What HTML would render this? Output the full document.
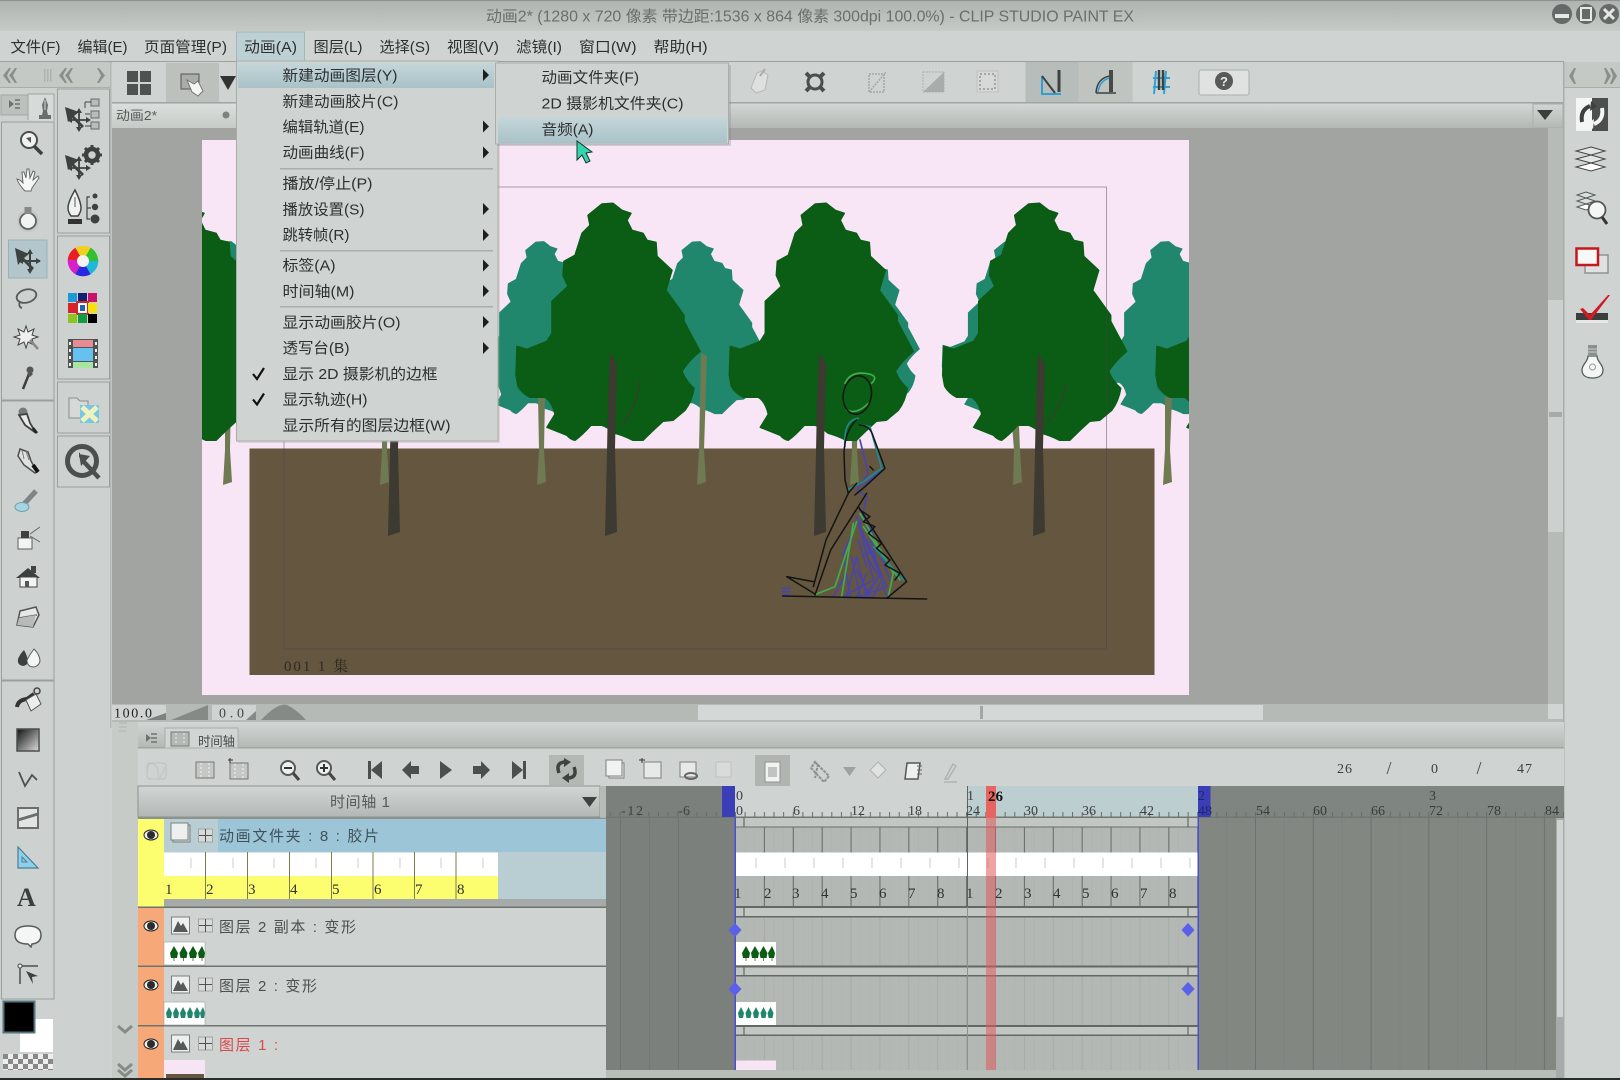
<!DOCTYPE html>
<html lang="zh"><head><meta charset="utf-8"><title>CLIP STUDIO PAINT EX</title>
<style>
html,body{margin:0;padding:0;background:#cfd4d2;width:1620px;height:1080px;overflow:hidden}
svg{display:block;position:absolute;left:0;top:0}
text{font-family:"Liberation Sans","Noto Sans CJK SC",sans-serif;font-size:15px;fill:#2c3030}
.s{font-family:"Liberation Serif","Noto Serif CJK SC",serif}
.n{font-family:"Liberation Serif",serif;font-size:14px;fill:#3c403e}
.nb{font-family:"Liberation Serif",serif;font-size:15px;fill:#2e3230}
.r{font-size:15px;fill:#3a3e3c}
</style></head><body>
<svg width="1620" height="1080" viewBox="0 0 1620 1080" xmlns="http://www.w3.org/2000/svg">
<defs>
<linearGradient id="gT" x1="0" y1="0" x2="0" y2="1"><stop offset="0" stop-color="#aeb3b0"/><stop offset="1" stop-color="#c5cac7"/></linearGradient>
<linearGradient id="gB" x1="0" y1="0" x2="0" y2="1"><stop offset="0" stop-color="#d2d7d5"/><stop offset="1" stop-color="#b3b8b5"/></linearGradient>
<linearGradient id="gH" x1="0" y1="0" x2="0" y2="1"><stop offset="0" stop-color="#c5d6d9"/><stop offset="1" stop-color="#a9c2c8"/></linearGradient>
<linearGradient id="gG" x1="0" y1="0" x2="1" y2="1"><stop offset="0" stop-color="#111"/><stop offset="1" stop-color="#ddd"/></linearGradient>
<linearGradient id="gS" x1="0" y1="0" x2="0" y2="1"><stop offset="0" stop-color="#dadedc"/><stop offset="1" stop-color="#c6cbc8"/></linearGradient>
<pattern id="pTick" patternUnits="userSpaceOnUse" x="735" y="812" width="9.63" height="5"><rect width="1" height="5" fill="#666c68"/></pattern>
<pattern id="pG3" patternUnits="userSpaceOnUse" x="735" y="0" width="28.89" height="10"><rect width="1" height="10" fill="#a6aba8"/></pattern>
<pattern id="pG1" patternUnits="userSpaceOnUse" x="735" y="0" width="9.63" height="10"><rect width="1" height="10" fill="#afb4b1"/></pattern>
<pattern id="pD" patternUnits="userSpaceOnUse" x="735" y="0" width="57.78" height="10"><rect width="1" height="10" fill="#6c726e"/></pattern>
<pattern id="pD3" patternUnits="userSpaceOnUse" x="735" y="0" width="28.89" height="10"><rect width="1" height="10" fill="#777d79"/></pattern>
<pattern id="pV" patternUnits="userSpaceOnUse" x="735" y="0" width="28.89" height="10"><rect width="1" height="10" fill="#666b68"/></pattern>
<pattern id="pC" patternUnits="userSpaceOnUse" x="3" y="1054" width="10" height="10"><rect width="10" height="10" fill="#eee"/><rect width="5" height="5" fill="#888"/><rect x="5" y="5" width="5" height="5" fill="#888"/></pattern>
<clipPath id="cP"><rect x="202" y="140" width="987" height="555"/></clipPath>
<path id="tree" d="M-8,.7 L3,0 L12,7 L21,10 L17,17 L22,27 L33,30 L37,37 L46,39 L47,53 L62,67 L56,87 L74,112 L74,118 L90,148 Q78,158 72,168 Q76,178 84,185 Q82,198 75,207 L63,217 L53,218 Q42,228 33,237 L23,237 Q13,232 5,230 Q-2,224 -8,222 L-19,222 Q-28,232 -35,237 Q-40,236 -43,232 L-63,224 L-55,211 Q-58,198 -65,194 L-80,194 Q-88,190 -92,183 L-94,172 L-93,143 L-83,146 L-63,138 L-58,130 L-58,98 L-42,83 L-47,72 L-46,58 L-35,52 L-28,30 L-20,22 L-22,12 Z" stroke-linejoin="round"/>
</defs>

<rect width="1620" height="1080" fill="#cfd4d2"/>
<!-- title bar -->
<rect width="1620" height="31" fill="url(#gT)"/>
<rect width="1620" height="1" fill="#8d928f"/>
<text x="486" y="21.5" style="font-size:15.5px;fill:#6a6f6c" textLength="648" lengthAdjust="spacingAndGlyphs">动画2* (1280 x 720 像素 带边距:1536 x 864 像素 300dpi 100.0%)  - CLIP STUDIO PAINT EX</text>
<g fill="#656a68"><ellipse cx="1562" cy="14" rx="10" ry="10"/><ellipse cx="1586" cy="14" rx="10" ry="10"/><ellipse cx="1609" cy="14" rx="10" ry="10"/></g>
<rect x="1555" y="14" width="14" height="4" fill="#e4e7e6"/><rect x="1581" y="8" width="10" height="12" fill="none" stroke="#e4e7e6" stroke-width="2"/>
<path d="M1604,9L1614,19M1614,9L1604,19" stroke="#e4e7e6" stroke-width="3"/>

<!-- menu bar -->
<rect y="31" width="1620" height="30" fill="#cfd4d2"/>
<rect x="236.500" y="32" width="68" height="29" fill="#bdd0d4" stroke="#a4b6ba"/>
<text x="10.500" y="52" textLength="50" lengthAdjust="spacingAndGlyphs">文件(F)</text>
<text x="77.500" y="52" textLength="50" lengthAdjust="spacingAndGlyphs">编辑(E)</text>
<text x="144" y="52" textLength="83" lengthAdjust="spacingAndGlyphs">页面管理(P)</text>
<text x="244" y="52" textLength="53" lengthAdjust="spacingAndGlyphs">动画(A)</text>
<text x="313.500" y="52" textLength="49" lengthAdjust="spacingAndGlyphs">图层(L)</text>
<text x="379.500" y="52" textLength="50.500" lengthAdjust="spacingAndGlyphs">选择(S)</text>
<text x="447" y="52" textLength="52" lengthAdjust="spacingAndGlyphs">视图(V)</text>
<text x="516" y="52" textLength="46" lengthAdjust="spacingAndGlyphs">滤镜(I)</text>
<text x="579" y="52" textLength="57.500" lengthAdjust="spacingAndGlyphs">窗口(W)</text>
<text x="653.500" y="52" textLength="54" lengthAdjust="spacingAndGlyphs">帮助(H)</text>

<!-- top toolbar -->
<rect y="61" width="1564" height="1.500" fill="#9da29f"/>
<rect x="112" y="62" width="1452" height="41" fill="#cfd4d2"/>
<rect x="112" y="102" width="1452" height="1.500" fill="#a2a7a4"/>
<rect x="112" y="104" width="1452" height="24" fill="url(#gB)"/>
<rect x="112" y="104" width="124" height="24" fill="url(#gS)"/>
<rect x="166" y="63" width="53" height="39" fill="#bcc1be"/>
<g fill="#4e5351"><rect x="127" y="71" width="11" height="11"/><rect x="140" y="71" width="11" height="11"/><rect x="127" y="84" width="11" height="11"/><rect x="140" y="84" width="11" height="11"/></g>
<path d="M181,74h18v15h-18z" fill="#a8adaa" stroke="#555" stroke-width="1"/><path d="M187,80l7,4 4,-3 5,10 -5,5 -6,-4z" fill="#f4f5f5" stroke="#777"/>
<path d="M220,76h16l-8,14z" fill="#333"/>
<!-- toolbar right -->
<rect x="1025.500" y="62" width="53" height="40" fill="#b7bdba"/><rect x="1078.500" y="62" width="54" height="40" fill="#bfc4c1"/>
<path d="M751,88l6,-15 5,-2 6,4 -3,15 -9,3z" fill="#dde0de" stroke="#b3b7b5"/><path d="M760,76l5,-7" stroke="#aaa" stroke-width="2"/>
<g fill="none" stroke="#4a4f4d" stroke-width="4"><circle cx="815" cy="82" r="7" stroke-width="3"/><path d="M806,73l4,4M824,73l-4,4M806,91l4,-4M824,91l-4,-4"/></g>
<path d="M869,74h15v18h-15z M869,92L886,72" fill="none" stroke="#a4a8a6" stroke-dasharray="2 1" stroke-width="1.500"/>
<path d="M923,72h21v20h-21z" fill="none" stroke="#aeb2b0" stroke-dasharray="2 1"/><path d="M923,92L944,72V92z" fill="#a8acaa"/>
<rect x="977" y="71" width="21" height="21" fill="#d6d9d8" stroke="#bcc0be"/><path d="M980,74h15v15h-15z" fill="none" stroke="#a3a7a5" stroke-dasharray="2 2" stroke-width="2"/>
<path d="M1042,76V94H1061" fill="none" stroke="#2e9fd0" stroke-width="2"/><path d="M1042,76L1055,93" fill="none" stroke="#3d4240" stroke-width="2"/><path d="M1059,70V92" stroke="#3d4240" stroke-width="3"/>
<path d="M1096,93Q1097,78 1110,76M1096,93H1116" fill="none" stroke="#3d4240" stroke-width="1.500"/><path d="M1098,92Q1100,80 1110,78" fill="none" stroke="#2e9fd0" stroke-width="1.500"/><path d="M1111,70V92" stroke="#464b49" stroke-width="4"/>
<path d="M1153,78h17M1153,87h17M1156,71l-2,23M1166,71l-2,23" stroke="#2ea3d6" stroke-width="2" fill="none"/><path d="M1159,70v20M1163,70v20" stroke="#3d4240" stroke-width="2.500"/>
<rect x="1199" y="70" width="50" height="25" rx="2" fill="#dfe2e1" stroke="#a9aeab"/><circle cx="1224" cy="81" r="9" fill="#565b59"/><text x="1220" y="86" style="font-size:13px;font-weight:700;fill:#e8ebe9">?</text>
<path d="M1537,110h16l-8,10z" fill="#3a3e3c"/><rect x="1533" y="104" width="30" height="24" fill="none" stroke="#a9aeab"/>
<!-- document tab -->
<text x="116" y="120" style="font-size:13px;fill:#555a58" textLength="41" lengthAdjust="spacingAndGlyphs">动画2*</text>
<circle cx="226" cy="115" r="3.500" fill="#7d827f"/>

<!-- canvas area -->
<rect x="112" y="128" width="1436" height="577" fill="#a1a4a1"/>
<rect x="202" y="140" width="987" height="555" fill="#f8e6f6"/>
<rect x="249.500" y="448.500" width="905" height="226.500" fill="#65563f"/>
<g clip-path="url(#cP)">
 <g fill="#21876c" stroke="#21876c" stroke-width="1.500">
  <use href="#tree" transform="translate(229,241.700) scale(.725)"/><use href="#tree" transform="translate(385.500,241.700) scale(.725)"/><use href="#tree" transform="translate(541.700,241.700) scale(.725)"/><use href="#tree" transform="translate(698,241.700) scale(.725)"/><use href="#tree" transform="translate(854,241.700) scale(.725)"/><use href="#tree" transform="translate(1010.500,241.700) scale(.725)"/><use href="#tree" transform="translate(1166.700,241.700) scale(.725)"/>
 </g>
 <g fill="#6e7a52">
  <path d="M225,395h6l-1,55 2,32 -9,3 2,-35z"/><path d="M382,395h6l-1,55 2,32 -9,3 2,-35z"/><path d="M538,395h7l-1,55 2,32 -9,3 2,-35z"/><path d="M701,353l6,3 -3,94 2,32 -9,3 2,-35z"/><path d="M851,395h7l-1,55 2,32 -9,3 2,-35z"/><path d="M1012,425h7l1,25 2,32 -9,3 1,-35z"/><path d="M1165,397h7l-2,53 2,32 -9,3 2,-35z"/>
 </g>
 <g fill="#0b5c14" stroke="#0b5c14" stroke-width="1.500">
  <use href="#tree" transform="translate(183,203.300)"/><use href="#tree" transform="translate(396.700,203.300)"/><use href="#tree" transform="translate(610,203.300)"/><use href="#tree" transform="translate(823.300,203.300)"/><use href="#tree" transform="translate(1036.700,203.300)"/><use href="#tree" transform="translate(1250,203.300)"/>
 </g>
 <g fill="#3d3a31">
  <path d="M393,353l7,11 -1,40 -1,44 2,84 -12,4 2,-84 1,-50z"/><path d="M610,353l7,11 -1,40 -1,44 2,84 -12,4 2,-84 1,-50z"/><path d="M819,353l7,11 -1,40 -1,44 2,84 -12,4 2,-84 1,-50z"/><path d="M1038,353l7,11 -1,40 -1,44 2,84 -12,4 2,-84 1,-50z"/>
 </g>
 <g fill="none" stroke="#3d3a31" stroke-width="1.200"><path d="M622,425Q636,410 640,380"/><path d="M1045,425Q1060,410 1066,385"/></g>
</g>
<rect x="284" y="187" width="822.500" height="462" fill="none" stroke="#4a3c4c" stroke-opacity=".45"/>
<text class="s" x="284" y="671" style="font-size:15px;fill:#2e2a20" textLength="64">001 1 集</text>
<!-- figure -->
<g transform="translate(700,340) scale(.3333)" fill="none" stroke-linecap="round" stroke-linejoin="round">
 <g stroke="#4a45a8" stroke-width="5"><path d="M480,300L505,400 470,450 500,470 480,560 530,680 560,770"/><path d="M465,560L430,640 450,770"/><path d="M490,520L540,700 500,770 470,650 440,770"/><path d="M470,530L520,720 430,770"/><path d="M510,560L570,720M500,600L560,740 480,770"/><path d="M248,745h22M248,755h22M248,765h22"/><path d="M550,380L490,440"/><path d="M455,650L480,770M470,690L510,770M500,700L470,770M530,720L490,770M440,700L400,770M540,730L520,770"/><path d="M480,560L510,640 495,640 530,700M475,600L500,680"/></g>
 <g stroke="#42ad4e" stroke-width="5"><path d="M435,130Q450,95 495,100T515,130"/><path d="M440,210Q470,225 505,190"/><path d="M470,545L405,740 350,762"/><path d="M460,550L425,770"/><path d="M480,520L580,700 565,770"/><path d="M490,560L600,720"/></g>
 <g stroke="#1f8a90" stroke-width="5"><path d="M435,320Q430,240 475,235"/><path d="M545,385L510,260 485,255"/><path d="M440,450L490,425 545,385"/><path d="M520,620L610,720"/></g>
 <g stroke="#131512" stroke-width="4.500"><ellipse cx="472" cy="165" rx="42" ry="58" transform="rotate(10 472 165)"/><path d="M478,255Q510,255 520,290L555,385 495,440 465,465"/><path d="M470,240Q435,270 432,340L435,420 445,460 378,600 340,740"/><path d="M500,460L392,630 345,765"/><path d="M475,500L620,725 560,775"/><path d="M340,725L260,710 345,762"/><path d="M248,768L680,777"/><path d="M480,510L510,530 490,545 525,560 505,580 545,610 530,625 570,660 555,675 600,700 585,720"/><path d="M445,460L470,430"/><path d="M510,380l10,10"/></g>
</g>

<!-- canvas scrollbars -->
<rect x="1548" y="128" width="15" height="577" fill="#b6bbb8"/>
<rect x="1548" y="300" width="15" height="232" fill="#ccd1cf"/><rect x="1549" y="412" width="13" height="5" fill="#a6aba8"/>
<rect x="112" y="704" width="1452" height="18" fill="#b5bab7"/>
<rect x="112" y="705" width="54" height="15" fill="#cfd4d2"/><path d="M146,720L166,713V720z" fill="#7c827f"/>
<path d="M171,720L208,705V720z" fill="#858a87"/>
<rect x="212" y="705" width="44" height="15" fill="#cfd4d2"/><path d="M246,720L256,711V720z" fill="#858a87"/>
<path d="M261,720Q278,702 287,705Q297,710 306,720z" fill="#858a87"/>
<text class="s" x="114" y="717.500" style="font-size:14px;fill:#222" textLength="38">100.0</text>
<text class="s" x="219" y="717.500" style="font-size:14px;fill:#444" textLength="25">0.0</text>
<rect x="698" y="705" width="565" height="15" fill="#d4d8d6"/><rect x="980" y="706" width="3" height="13" fill="#a3a8a5"/>
<rect x="1548" y="704" width="15" height="15" fill="#d1d5d3"/>

<!-- left tool columns -->
<rect x="0" y="62" width="111" height="1018" fill="#cdd2d0"/>
<rect x="0" y="62" width="111" height="25" fill="#c4c9c6"/><rect x="0" y="87" width="111" height="1" fill="#a9aeab"/>
<rect x="110" y="62" width="1.500" height="666" fill="#b3b8b5"/>
<g fill="#8a8f8c"><path d="M9,68l-6,7.500 6,7.500 2,0 -4,-7.500 4,-7.500zM15,68l-6,7.500 6,7.500 2,0 -4,-7.500 4,-7.500z"/><path d="M65,68l-6,7.500 6,7.500 2,0 -4,-7.500 4,-7.500zM71,68l-6,7.500 6,7.500 2,0 -4,-7.500 4,-7.500z"/><path d="M99,68l6,7.500 -6,7.500 -2,0 4,-7.500 -4,-7.500z"/></g>
<g fill="#aeb3b0"><rect x="44" y="69" width="1.500" height="13"/><rect x="47" y="69" width="1.500" height="13"/><rect x="50" y="69" width="1.500" height="13"/></g>
<rect x="1" y="95" width="27" height="20" fill="#bcc1be" stroke="#a3a8a5"/>
<path d="M28,120V94H54V121" fill="#d6dad8" stroke="#9fa4a1"/>
<path d="M9,100l5,4 -5,4z" fill="#6e7370"/><path d="M15,100h5M15,104h5M15,108h5" stroke="#6e7370" stroke-width="1.500"/>
<path d="M45,97l3,8 -1,6 1,4h3v4h-12v-4h3l1,-4 -1,-6z" fill="#6a6f6c"/><path d="M45,100v10" stroke="#ddd"/>
<g fill="none" stroke="#9ba09d"><rect x="1.500" y="122" width="52.500" height="278"/><rect x="1.500" y="401" width="52.500" height="279"/><rect x="1.500" y="681" width="52.500" height="318"/>
<rect x="57.500" y="89" width="52" height="144"/><rect x="57.500" y="236" width="52" height="143"/><rect x="57.500" y="382" width="52" height="51"/><rect x="57.500" y="436" width="52" height="51"/></g>

<!-- left col 1 icons -->
<g transform="translate(29,140)"><circle r="8" fill="#f0f2f1" stroke="#4a4f4d" stroke-width="2"/><path d="M5,6l8,8" stroke="#3c403e" stroke-width="3.500"/><path d="M-3,-2l5,-1v6z" fill="#555"/></g>
<g transform="translate(28,180)"><path d="M-3,11Q-9,5 -11,-1L-8,0 -5,3 -6,-8 -4,-8 -2,-2 -1,-11 1,-11 2,-2 5,-9 7,-8 5,0 10,-4 11,-2 4,8 3,11z" fill="#f6f7f7" stroke="#666b68"/></g>
<g transform="translate(28,221)"><circle r="11" fill="#bcc0be" opacity=".6"/><circle r="8" fill="#f2f3f3" stroke="#5f6461" stroke-width="1.800"/><rect x="-3.500" y="-14" width="7" height="7" fill="#85898a"/></g>
<rect x="8.500" y="240" width="38.500" height="38" fill="#b2c6cb" stroke="#9cb1b6"/>
<g fill="#3c4240"><path d="M15,248L29,254 24,258 34,268 32,270 22,260 18,265z"/><path d="M30,251v21M20,261H40" stroke="#3c4240" stroke-width="2"/><path d="M30,249l-3,5h6zM30,274l-3,-5h6zM18,261l5,-3v6zM41,261l-5,-3v6z"/></g>
<g transform="translate(27,298)" fill="none" stroke="#555a58" stroke-width="1.800"><ellipse cy="-2" rx="10" ry="6.500" transform="rotate(-15)"/><path d="M-7,3Q-9,9 -5,10"/></g>
<g transform="translate(26,336)"><path d="M0,-10l2,6 6,-3 -2,6 6,2 -6,2 2,6 -6,-3 -2,6 -2,-6 -6,3 2,-6 -6,-2 6,-2 -2,-6 6,3z" fill="#efefef" stroke="#444"/><path d="M4,4l8,9" stroke="#888" stroke-width="2.500"/></g>
<g transform="translate(28,377)"><path d="M-5,12L1,-3" stroke="#3a3e3c" stroke-width="2.500"/><path d="M-1,-3l3,-3 3,3 -3,3z" fill="#555"/><circle cx="2" cy="-7" r="3.500" fill="#555"/></g>
<g transform="translate(28,420)"><circle cx="-5" cy="-8" r="4.500" fill="#777c79"/><path d="M-9,-5l8,-1 3,9 6,10 -11,-8z" fill="#e8eae9" stroke="#3e4341" stroke-width="1.800"/><path d="M5,8l4,5" stroke="#222" stroke-width="2.500"/></g>
<g transform="translate(28,460)"><path d="M-8,-11l8,3 3,9 6,11 -2,1 -11,-8 -6,-9z" fill="#dfe2e1" stroke="#4a4f4d" stroke-width="1.500"/><path d="M-6,-10l2,9M-2,-9l3,9" stroke="#777c79"/><path d="M5,5l5,7" stroke="#111" stroke-width="4"/></g>
<g transform="translate(28,500)"><path d="M-4,4L8,-9" stroke="#80858a" stroke-width="5"/><ellipse cx="-6" cy="7" rx="7" ry="4.500" fill="#a8d4e0" stroke="#6a9fb0"/></g>
<g transform="translate(28,538)"><rect x="-10" y="0" width="14" height="11" fill="#f2f3f3" stroke="#5a5f5c"/><rect x="-7" y="-7" width="8" height="7" fill="#3c403e"/><path d="M2,-4l10,-7M2,-2l10,6" stroke="#666"/></g>
<g transform="translate(28,577)"><path d="M-12,1L0,-9 12,1z" fill="#3c403e"/><rect x="-8" y="0" width="17" height="10" fill="#f2f3f3" stroke="#444"/><rect x="3" y="-11" width="5" height="7" fill="#444"/><rect x="-3" y="4" width="4" height="6" fill="#555"/></g>
<g transform="translate(28,617)"><path d="M-8,-6L8,-10 11,-2 5,10 -11,8z" fill="#e6e8e7" stroke="#4f5451" stroke-width="1.500"/><path d="M-9,1L9,-2" stroke="#5a5f5c" stroke-width="1.500"/><path d="M-9,1L8,-2 5,10 -11,8z" fill="#b6bab8"/></g>
<g transform="translate(28,657)"><path d="M-5,9Q-11,8 -10,2 -8,-3 -4,-7 -1,-2 0,4 0,8 -5,9z" fill="#3c403e"/><path d="M6,10Q-1,10 -1,3 2,-3 6,-8 12,-2 12,4 11,9 6,10z" fill="#f4f5f5" stroke="#5d6260"/></g>
<g transform="translate(28,700)"><path d="M-11,7Q-10,0 -1,-1L6,-6" stroke="#333" stroke-width="4" fill="none"/><path d="M-2,0L8,-6 13,4 3,11z" fill="#eceeed" stroke="#555"/><circle cx="9" cy="-9" r="3" fill="none" stroke="#444" stroke-width="1.500"/></g>
<rect x="17" y="729" width="22" height="22" fill="url(#gG)" stroke="#4a4f4d" stroke-width="1.500"/>
<path d="M19,772L25,786 32,775 37,780" fill="none" stroke="#4c514f" stroke-width="1.800"/>
<g fill="#e2e4e3" stroke="#6a6f6c" stroke-width="2"><rect x="18" y="808" width="20" height="20"/></g><path d="M18,820L38,814" stroke="#6a6f6c" stroke-width="3"/>
<path d="M18,847V868H38z" fill="#8ed0ea" stroke="#4a7e96" stroke-width="1.200"/><path d="M22,862v-5l5,5z" fill="none" stroke="#4a7e96"/>
<text class="s" x="17" y="906" style="font-size:26px;font-weight:700;fill:#3a3e3c">A</text>
<path d="M15,935Q15,926 28,926T41,935Q41,943 32,944L31,947 28,944Q15,944 15,935z" fill="#f4f5f5" stroke="#585d5a" stroke-width="1.500"/>
<g transform="translate(28,975)"><path d="M-8,-9V9" stroke="#4c514f" stroke-width="1.500"/><path d="M-8,-9H10" stroke="#4c514f" stroke-width="1.500"/><path d="M-2,-4L10,1 4,2 5,9z" fill="#3c403e"/><circle cx="-8" cy="-9" r="2" fill="#f2f3f3" stroke="#444"/></g>
<!-- colours -->
<rect x="20" y="1019" width="33" height="33" fill="#fff"/>
<rect x="3.500" y="1001.500" width="31" height="31" fill="#000" stroke="#53777f" stroke-width="2"/>
<rect x="3" y="1054" width="50" height="16" fill="url(#pC)"/>

<!-- left col 2 icons -->
<g fill="#3c4240"><path d="M65,107L79,112 74,116 84,126 82,128 72,118 68,122z"/><path d="M79,110v20M69,120H89" stroke="#3c4240" stroke-width="1.800"/><path d="M79,108l-3,5h6zM79,132l-3,-5h6zM67,120l5,-3v6zM91,120l-5,-3v6z"/></g>
<g fill="#b8bcba" stroke="#666b68"><rect x="91" y="99" width="8" height="7"/><rect x="91" y="111" width="8" height="7"/><rect x="91" y="122" width="8" height="7"/></g>
<path d="M85,102v0h6M85,102v6M85,114h5M85,126h6" stroke="#444" fill="none"/>
<g fill="#3c4240"><path d="M65,155L79,160 74,164 84,174 82,176 72,166 68,170z"/><path d="M79,158v20M69,168H89" stroke="#3c4240" stroke-width="1.800"/><path d="M79,156l-3,5h6zM79,180l-3,-5h6zM67,168l5,-3v6zM91,168l-5,-3v6z"/></g>
<circle cx="92" cy="155" r="6" fill="#cdd2d0" stroke="#3c4240" stroke-width="4.500"/><g stroke="#3c4240" stroke-width="3"><path d="M92,145v3M92,162v3M82,155h3M99,155h3M85,148l2,2M97,160l2,2M85,162l2,-2M97,150l2,-2"/></g>
<path d="M75,190q6,12 6,18 0,4 -3,8h-7q-3,-4 -3,-8 0,-6 7,-18z" fill="#f0f2f1" stroke="#444" stroke-width="1.500"/><path d="M75,197v10" stroke="#555"/><rect x="68" y="219" width="14" height="5" fill="#333"/>
<path d="M90,197h-3v22h3M87,208h4" fill="none" stroke="#444" stroke-width="1.200"/><circle cx="95" cy="196" r="2.500" fill="#3c4240"/><circle cx="95" cy="207" r="3.200" fill="#3c4240"/><circle cx="95" cy="219" r="4.500" fill="#3c4240"/>
<!-- colour wheel -->
<g transform="translate(83,261)" fill="none" stroke-width="9.500"><circle r="10.500" stroke="#e82020" stroke-dasharray="12 100" transform="rotate(-180)"/><circle r="10.500" stroke="#f0d020" stroke-dasharray="12 100" transform="rotate(-120)"/><circle r="10.500" stroke="#30c030" stroke-dasharray="12 100" transform="rotate(-60)"/><circle r="10.500" stroke="#20b8d8" stroke-dasharray="12 100" transform="rotate(0)"/><circle r="10.500" stroke="#2828e0" stroke-dasharray="12 100" transform="rotate(60)"/><circle r="10.500" stroke="#d820c8" stroke-dasharray="12 100" transform="rotate(120)"/></g>
<circle cx="83" cy="261" r="6" fill="#f2f3f3"/>
<g><rect x="68" y="293" width="9" height="9" fill="#1a9bd7"/><rect x="78" y="293" width="9" height="9" fill="#15206f"/><rect x="88" y="293" width="9" height="9" fill="#c8136c"/><rect x="68" y="303" width="9" height="10" fill="#d8222a"/><rect x="77" y="302" width="11" height="12" fill="#fff" stroke="#d8222a" stroke-width="2"/><rect x="80" y="305" width="5" height="6" fill="#1a6ab0"/><rect x="88" y="303" width="9" height="10" fill="#f5e111"/><rect x="68" y="314" width="9" height="9" fill="#8fc31f"/><rect x="78" y="314" width="9" height="9" fill="#159a44"/><rect x="88" y="314" width="9" height="9" fill="#000"/></g>
<rect x="68" y="339" width="30" height="29" fill="#4f5452"/><rect x="73" y="340" width="20" height="7" fill="#e88c94"/><rect x="73" y="348" width="20" height="13" fill="#64c1f0"/><rect x="73" y="362" width="20" height="6" fill="#a8e5a0"/>
<path d="M70,342v3M70,349v3M70,356v3M70,363v3M96,342v3M96,349v3M96,356v3M96,363v3" stroke="#eee" stroke-width="2"/>
<path d="M69,418v-20h8l3,3h8v17z" fill="#d6d9d8" stroke="#8a8f8c"/><rect x="80" y="405" width="19" height="18" fill="#79c7e0"/><path d="M82,407L97,421M97,407L82,421" stroke="#eef2c0" stroke-width="5"/>
<circle cx="82" cy="461" r="14.500" fill="none" stroke="#4b504e" stroke-width="5"/><path d="M80,455h-1l0,0M84,462l15,16" stroke="#4b504e" stroke-width="4.500" fill="none"/><path d="M79,454l11,2 -9,10z" fill="#4b504e"/>

<!-- right column -->
<rect x="1564" y="62" width="56" height="1018" fill="#cfd4d2"/>
<rect x="1564" y="62" width="56" height="25" fill="#c4c9c6"/>
<rect x="1563" y="62" width="1.500" height="1016" fill="#a9aeab"/>
<rect x="1564" y="87" width="56" height="1" fill="#a9aeab"/>
<path d="M1574,68l-5,8 5,8 2,0 -3,-8 3,-8z" fill="#8a8f8c"/><path d="M1606,68l5,8 -5,8 -2,0 3,-8 -3,-8zM1612,68l5,8 -5,8 -2,0 3,-8 -3,-8z" fill="#8a8f8c"/>
<rect x="1576" y="98" width="32" height="33" fill="#f4f5f5"/><path d="M1592,98h16v33h-16z" fill="#4b504e"/>
<path d="M1582,122Q1580,110 1590,106" fill="none" stroke="#3c403e" stroke-width="4"/><path d="M1591,101l6,5 -7,5z" fill="#3c403e"/>
<path d="M1602,108Q1604,120 1594,124" fill="none" stroke="#f4f5f5" stroke-width="4"/><path d="M1593,129l-6,-5 7,-5z" fill="#f4f5f5"/>
<g fill="#e4e6e5" stroke="#444"><path d="M1591,147l14,4 -14,4 -15,-4z"/><path d="M1591,155l14,4 -14,4 -15,-4z"/><path d="M1591,163l14,4 -14,4 -15,-4z" fill="#fff"/></g>
<g fill="#dcdfde" stroke="#555a58"><path d="M1586,192l9,3 -9,3 -9,-3z"/><path d="M1586,198l9,3 -9,3 -9,-3z"/><path d="M1586,204l9,3 -9,3 -9,-3z" fill="#fff"/></g><circle cx="1597" cy="210" r="8.500" fill="#f4f5f5" stroke="#555" stroke-width="1.800"/><path d="M1602,217l5,7" stroke="#333" stroke-width="3"/>
<rect x="1585" y="255" width="23" height="18" fill="#dfe2e0" stroke="#8f9491" stroke-width="1.500"/><rect x="1576.500" y="248.500" width="21.500" height="16.500" fill="#f8f8f8" stroke="#c4181c" stroke-width="2.500"/>
<rect x="1576" y="313" width="32" height="7" fill="#3a3f3d"/><rect x="1576" y="320" width="32" height="3" fill="#e7e9e8"/>
<path d="M1580,309l3,-1 7,7 18,-20 2,0 -19,25 -2,0z" fill="#cf1c22"/>
<path d="M1588,356C1588,362 1582,364 1582,370C1582,376 1587,378 1592.500,378C1598,378 1603,376 1603,370C1603,364 1597,362 1597,356Z" fill="#f4f5f5" stroke="#555a58" stroke-width="1.300"/><rect x="1588" y="345" width="9" height="11" fill="#8b908d"/><path d="M1588,349h9M1588,352h9" stroke="#ccc"/><circle cx="1592.500" cy="367" r="3" fill="none" stroke="#999"/>

<!-- timeline panel -->
<rect x="112" y="722" width="1452" height="358" fill="#cfd4d2"/>
<rect x="112" y="722" width="26" height="356" fill="#c6cbc8"/>
<rect x="138" y="722" width="1426" height="26" fill="url(#gB)"/>
<rect x="138" y="747" width="1426" height="1.500" fill="#a1a6a3"/>
<rect x="165" y="728" width="73" height="20" fill="#d1d5d3" stroke="#a9aeab"/>
<rect x="171" y="732" width="18" height="14" fill="#b4b9b6" stroke="#777c79"/><path d="M176,733v12M184,733v12" stroke="#eee" stroke-dasharray="2 2"/>
<text x="198" y="746" style="font-size:13px;fill:#444846" textLength="37" lengthAdjust="spacingAndGlyphs">时间轴</text>
<path d="M146,742l5,-4 -5,-4z" fill="#6f7472"/><path d="M151,734h6M151,738h6M151,742h6" stroke="#6f7472" stroke-width="1.500"/>
<path d="M119,737h8M119,741h8M119,745h8" transform="translate(0,-14)" stroke="#b0b5b2"/>
<path d="M118,1026l7,6 7,-6" fill="none" stroke="#868b88" stroke-width="3"/><path d="M118,1064l7,6 7,-6M118,1070l7,6 7,-6" fill="none" stroke="#868b88" stroke-width="3"/>
<!-- timeline tool row -->
<rect x="549" y="755" width="35" height="30" fill="#b3b8b5"/><rect x="755" y="755" width="35" height="36" fill="#b0b5b2"/>
<path d="M147,776Q147,762 153,764T158,776 165,767" stroke="#c0c5c2" fill="none"/><rect x="147" y="763" width="19" height="16" fill="none" stroke="#bcc1be" rx="3"/>
<g fill="#c3c8c5" stroke="#777"><rect x="196" y="762" width="18" height="16"/><rect x="230" y="763" width="18" height="16"/></g><path d="M201,763v14M209,763v14M235,764v14M243,764v14" stroke="#f4f4f4" stroke-dasharray="2 2"/>
<path d="M230,758v5M228,760h5" stroke="#333"/>
<g fill="#eef0ef" stroke="#555a58" stroke-width="2"><circle cx="288" cy="768" r="7"/><circle cx="324" cy="768" r="7"/></g><path d="M293,773l6,7M329,773l6,7" stroke="#444" stroke-width="3"/><path d="M284,768h8M320,768h8M324,764v8" stroke="#333" stroke-width="2"/>
<g fill="#4b504e"><rect x="368" y="761" width="3" height="18"/><path d="M382,761v18l-11,-9z"/><path d="M402,770l9,-9v5h8v8h-8v5z"/><path d="M440,761l12,9 -12,9z"/><path d="M490,770l-9,-9v5h-8v8h8v5z"/><rect x="523" y="761" width="3" height="18"/><path d="M512,761v18l11,-9z"/></g>
<path d="M559,773Q555,762 566,762M574,767Q578,778 567,778" fill="none" stroke="#3e4341" stroke-width="3.500"/><path d="M564,758l7,4 -7,5zM569,773l-7,5 7,5z" fill="#3e4341"/>
<g fill="#e7e9e8" stroke="#7c817e"><rect x="609" y="763" width="15" height="15"/><rect x="606" y="760" width="16" height="16" fill="#f1f3f2"/><rect x="644" y="762" width="17" height="16"/><rect x="680" y="762" width="16" height="15"/></g>
<path d="M642,758v5M639,760h6" stroke="#333"/><ellipse cx="691" cy="776" rx="6" ry="3" fill="none" stroke="#666" stroke-width="2"/>
<g fill="#d8dbda" stroke="#bcc0be"><rect x="716" y="762" width="15" height="15"/></g>
<rect x="765" y="762" width="15" height="20" fill="#f1f3f2" stroke="#8d928f"/><rect x="768" y="767" width="9" height="10" fill="#bfc3c1"/>
<path d="M815,762l14,14 -5,6 -13,-14zM818,764l-3,14" fill="none" stroke="#8d928f" stroke-width="2" stroke-dasharray="3 1"/>
<path d="M843,767h13l-6.500,9z" fill="#9ea3a0"/>
<path d="M878,762l8,8 -8,8 -8,-8z" fill="#dfe2e1" stroke="#aeb3b0"/>
<path d="M907,763h13l-2,16h-13z" fill="#eef0ef" stroke="#545957" stroke-width="1.500"/><path d="M917,766h5M917,770h5M917,774h5" stroke="#666"/>
<path d="M945,779l8,-15 3,2 -8,13z M944,782h13" fill="none" stroke="#b0b5b2" stroke-width="1.500"/>
<text class="n" x="1337" y="773" style="font-size:14px" textLength="15">26</text>
<path d="M1391,762l-4,12M1481,762l-4,12" stroke="#555"/>
<text class="n" x="1431" y="773">0</text>
<text class="n" x="1517" y="773" textLength="15">47</text>

<!-- layer list -->
<rect x="138" y="786" width="462" height="31" fill="url(#gB)" stroke="#8d928f"/>
<text class="r" x="330" y="807" style="fill:#555a58" textLength="60">时间轴 1</text>
<path d="M582,797h15l-7.500,10z" fill="#3e4341"/>
<rect x="600" y="786" width="6" height="31" fill="#b6bbb8"/>
<rect x="138" y="817.500" width="468" height="1.500" fill="#8d928f"/>
<!-- folder -->
<rect x="138" y="819" width="26" height="88" fill="#fdfd70"/>
<rect x="164" y="819" width="442" height="33" fill="#9cc6d8"/><rect x="164" y="819" width="54" height="33" fill="#b9ced4"/>
<rect x="164" y="852" width="442" height="47" fill="#b8ced3"/><rect x="164" y="899" width="442" height="8" fill="#a6abaa"/>
<rect x="164" y="852.500" width="334" height="23.500" fill="#fff"/><rect x="164" y="876" width="334" height="23" fill="#fdfd70"/>
<g stroke="#7c7c50" stroke-width="1"><path d="M205.500,852v47M247.500,852v47M289.500,852v47M331.500,852v47M373,852v47M414.500,852v47M456,852v47"/></g>
<g stroke="#d4d4d4" stroke-width="1.200"><path d="M191,858v10M233,858v10M274,858v10M316,858v10M358,858v10M400,858v10M441,858v10M483,858v10"/></g>
<g class="nb"><text class="nb" x="165" y="894">1</text><text class="nb" x="206" y="894">2</text><text class="nb" x="248" y="894">3</text><text class="nb" x="290" y="894">4</text><text class="nb" x="332" y="894">5</text><text class="nb" x="374" y="894">6</text><text class="nb" x="415" y="894">7</text><text class="nb" x="457" y="894">8</text></g>
<g fill="#eef0ef" stroke="#7a7f7c"><rect x="173" y="825" width="17" height="17" fill="#d3d6d5"/><rect x="171" y="823" width="17" height="17"/></g>
<text class="r" x="219" y="841" style="fill:#3f5058" textLength="160">动画文件夹 : 8 : 胶片</text>
<!-- layers -->
<rect x="138" y="907" width="26" height="59" fill="#f6a878"/><rect x="138" y="967" width="26" height="58" fill="#f6a878"/><rect x="138" y="1026" width="26" height="54" fill="#f6a878"/>
<rect x="138" y="906.500" width="468" height="1.500" fill="#6d7370"/><rect x="138" y="965.500" width="468" height="1.500" fill="#6d7370"/><rect x="138" y="1025" width="468" height="1.500" fill="#6d7370"/>
<g fill="#eef0ef" stroke="#7a7f7c"><rect x="171.500" y="917" width="18" height="17"/><rect x="171.500" y="976" width="18" height="17"/><rect x="171.500" y="1035" width="18" height="17"/></g>
<path d="M173,932l5,-11 3,5 2,-3 5,9zM173,991l5,-11 3,5 2,-3 5,9zM173,1050l5,-11 3,5 2,-3 5,9z" fill="#555a58"/>
<g fill="#d7dad9" stroke="#a0a5a2"><rect x="198.500" y="829" width="14" height="13"/><rect x="198.500" y="919" width="14" height="13"/><rect x="198.500" y="978" width="14" height="13"/><rect x="198.500" y="1037" width="14" height="13"/></g>
<path d="M205.500,829v13M199,835.500h13M205.500,919v13M199,925.500h13M205.500,978v13M199,984.500h13M205.500,1037v13M199,1043.500h13" stroke="#4d5250"/>
<g fill="#eef0ef" stroke="#222"><ellipse cx="151" cy="835" rx="7" ry="5"/><ellipse cx="151" cy="926" rx="7" ry="5"/><ellipse cx="151" cy="985" rx="7" ry="5"/><ellipse cx="151" cy="1044" rx="7" ry="5"/></g>
<g fill="#2c2c2c"><circle cx="151" cy="835" r="4"/><circle cx="151" cy="926" r="4"/><circle cx="151" cy="985" r="4"/><circle cx="151" cy="1044" r="4"/></g>
<text class="r" x="219" y="932" textLength="137" style="fill:#4c514f">图层 2 副本 : 变形</text>
<text class="r" x="219" y="991" textLength="98" style="fill:#4c514f">图层 2 : 变形</text>
<text class="r" x="219" y="1050" textLength="59" style="fill:#d9484c">图层 1 :</text>
<rect x="164" y="942" width="41" height="23" fill="#fff" stroke="#9ca19e" stroke-width=".6"/>
<rect x="164" y="1002" width="41" height="23" fill="#fff" stroke="#9ca19e" stroke-width=".6"/>
<rect x="164" y="1060" width="41" height="18" fill="#f7e4f4"/><rect x="166" y="1074" width="38" height="4" fill="#65563f"/>
<g fill="#0b5c14"><path d="M174,946l4,7 -1,5h-6l-1,-5z"/><path d="M183.500,946l4,7 -1,5h-6l-1,-5z"/><path d="M193,946l4,7 -1,5h-6l-1,-5z"/><path d="M202,946l3,7 -1,5h-5l-1,-5z"/></g>
<g fill="#21876c"><path d="M169,1007l3,6 -1,5h-4l-1,-5z"/><path d="M176,1007l3,6 -1,5h-4l-1,-5z"/><path d="M183,1007l3,6 -1,5h-4l-1,-5z"/><path d="M190,1007l3,6 -1,5h-4l-1,-5z"/><path d="M197,1007l3,6 -1,5h-4l-1,-5z"/><path d="M203,1007l2,6 -1,5h-3l-1,-5z"/></g>
<path d="M174,958v3M183.500,958v3M193,958v3M202,958v3" stroke="#6e7a52"/>

<!-- timeline grid -->
<rect x="606" y="786" width="129" height="292" fill="#7b807c"/>
<rect x="1198" y="786" width="366" height="284" fill="#828782"/>
<rect x="735" y="786" width="463" height="32" fill="#cfd4d2"/><rect x="967" y="786" width="231" height="32" fill="#bcced0"/>
<rect x="1198" y="786" width="366" height="31" fill="#7f8581"/>
<rect x="735" y="817" width="463" height="253" fill="#b3b8b5"/>
<rect x="735" y="826" width="463" height="244" fill="url(#pG1)"/>
<rect x="735" y="826" width="463" height="244" fill="url(#pG3)"/>
<rect x="1198" y="817" width="358" height="253" fill="url(#pD3)" opacity=".4"/>
<rect x="1198" y="817" width="358" height="253" fill="url(#pD)"/>
<rect x="620" y="817" width="1" height="253" fill="#6c726e"/><rect x="678" y="817" width="1" height="253" fill="#6c726e"/><rect x="649" y="817" width="1" height="253" fill="#727874"/>
<rect x="606" y="1070" width="950" height="8" fill="#b8bdba"/>
<rect x="1556" y="817" width="8" height="261" fill="#a7acaa"/><rect x="1557" y="820" width="6" height="197" fill="#cfd4d2"/>
<rect x="606" y="812" width="958" height="5" fill="url(#pTick)"/>
<rect x="606" y="816.500" width="958" height="1.500" fill="#707672"/>
<!-- folder row right -->
<rect x="735" y="826" width="463" height="1.500" fill="#696e6b"/>
<rect x="735" y="827" width="463" height="80" fill="url(#pV)"/>
<rect x="735" y="852.500" width="463" height="23.500" fill="#fff"/>
<g stroke="#cfcfcf" stroke-width="1.100"><path d="M756,858v10M785,858v10M814,858v10M843,858v10M872,858v10M901,858v10M930,858v10M959,858v10M988,858v10M1016,858v10M1045,858v10M1074,858v10M1103,858v10M1132,858v10M1161,858v10M1190,858v10"/></g>
<g><text class="nb" x="734" y="898">1</text><text class="nb" x="764" y="898">2</text><text class="nb" x="792" y="898">3</text><text class="nb" x="821" y="898">4</text><text class="nb" x="850" y="898">5</text><text class="nb" x="879" y="898">6</text><text class="nb" x="908" y="898">7</text><text class="nb" x="937" y="898">8</text><text class="nb" x="966" y="898">1</text><text class="nb" x="995" y="898">2</text><text class="nb" x="1024" y="898">3</text><text class="nb" x="1053" y="898">4</text><text class="nb" x="1082" y="898">5</text><text class="nb" x="1111" y="898">6</text><text class="nb" x="1140" y="898">7</text><text class="nb" x="1169" y="898">8</text></g>
<!-- row bars -->
<g fill="#c2c7c4"><rect x="735" y="818" width="463" height="8.500"/><rect x="735" y="908" width="463" height="8.500"/><rect x="735" y="967" width="463" height="8.500"/><rect x="735" y="1026.500" width="463" height="8.500"/></g>
<g fill="#636865"><rect x="735" y="906" width="463" height="2"/><rect x="735" y="916" width="463" height="1.500"/><rect x="735" y="965.500" width="463" height="2"/><rect x="735" y="975" width="463" height="1.500"/><rect x="735" y="1025" width="463" height="2"/><rect x="735" y="1034.500" width="463" height="1.500"/></g>
<path d="M744,818v9M1188,818v9M744,908v9M1188,908v9M744,967v9M1188,967v9M744,1026v9M1188,1026v9" stroke="#636865" stroke-width="1.200"/>
<rect x="967" y="786" width="1" height="121" fill="#5f6461"/><rect x="967" y="907" width="1" height="163" fill="#8c918e"/>
<!-- thumbs right -->
<rect x="735" y="942" width="41" height="23" fill="#fff"/>
<g fill="#0b5c14"><path d="M746,946l4,7 -1,5h-6l-1,-5z"/><path d="M755,946l4,7 -1,5h-6l-1,-5z"/><path d="M763.500,946l4,7 -1,5h-6l-1,-5z"/><path d="M772,946l3,7 -1,5h-5l-1,-5z"/></g>
<path d="M746,958v3M755,958v3M763.500,958v3M772,958v3" stroke="#6e7a52"/>
<rect x="735" y="1002" width="41" height="23" fill="#fff"/>
<g fill="#21876c"><path d="M741,1007l3,6 -1,5h-4l-1,-5z"/><path d="M748.500,1007l3,6 -1,5h-4l-1,-5z"/><path d="M756,1007l3,6 -1,5h-4l-1,-5z"/><path d="M763.500,1007l3,6 -1,5h-4l-1,-5z"/><path d="M770.500,1007l3,6 -1,5h-4l-1,-5z"/></g>
<rect x="735" y="1060.500" width="41" height="9.500" fill="#f7e4f4"/>
<!-- current frame -->
<rect x="986" y="786" width="10" height="32" fill="#e86460"/>
<rect x="986" y="818" width="10" height="252" fill="#e05a58" opacity=".55"/>
<!-- range markers -->
<rect x="722" y="786" width="13" height="31" fill="#3a3fb8"/>
<rect x="1198" y="786" width="12.500" height="31" fill="#3a3fb8"/>
<rect x="734.500" y="817" width="1.500" height="253" fill="#4a4fd8"/><rect x="1197.500" y="817" width="1.500" height="253" fill="#4a4fd8"/>
<g fill="#5b60ea"><path d="M735,923l6.500,7 -6.500,7 -6.500,-7z"/><path d="M735,982l6.500,7 -6.500,7 -6.500,-7z"/><path d="M1188,923l6.500,7 -6.500,7 -6.500,-7z"/><path d="M1188,982l6.500,7 -6.500,7 -6.500,-7z"/></g>
<!-- ruler labels -->
<g class="n"><text class="n" x="621" y="815" style="fill:#3d423f" textLength="22">-12</text><text class="n" x="678" y="815" style="fill:#3d423f" textLength="12">-6</text>
<text class="n" x="736" y="800">0</text><text class="n" x="736" y="815">0</text><text class="n" x="793" y="815">6</text><text class="n" x="851" y="815">12</text><text class="n" x="908" y="815">18</text><text class="n" x="967" y="800">1</text><text class="n" x="966" y="815">24</text><text class="n" x="1024" y="815">30</text><text class="n" x="1082" y="815">36</text><text class="n" x="1140" y="815">42</text>
<text class="n" x="1198" y="800" style="fill:#20246a">2</text><text class="n" x="1198" y="815" style="fill:#20246a">48</text><text class="n" x="1256" y="815" style="fill:#383d3a">54</text><text class="n" x="1313" y="815" style="fill:#383d3a">60</text><text class="n" x="1371" y="815" style="fill:#383d3a">66</text><text class="n" x="1429" y="800" style="fill:#383d3a">3</text><text class="n" x="1429" y="815" style="fill:#383d3a">72</text><text class="n" x="1487" y="815" style="fill:#383d3a">78</text><text class="n" x="1545" y="815" style="fill:#383d3a">84</text></g>
<text class="s" x="988" y="801" style="font-size:15px;font-weight:700;fill:#111">26</text>
<rect y="1078" width="1620" height="2" fill="#2a2c2b"/>

<!-- dropdown menu -->
<rect x="238" y="63" width="262" height="380" fill="#8d9290" opacity=".25"/>
<rect x="236.500" y="61" width="261.500" height="380" fill="#cfd4d2" stroke="#a9aeab"/>
<rect x="238" y="63" width="256" height="25" fill="url(#gH)"/>
<g fill="#a9aeab"><rect x="280" y="168" width="213" height="1.500"/><rect x="280" y="250" width="213" height="1.500"/><rect x="280" y="306" width="213" height="1.500"/></g>
<g fill="#1c1f1e"><path d="M483,69v12l6,-6z"/><path d="M483,120.500v12l6,-6z"/><path d="M483,146.500v12l6,-6z"/><path d="M483,203v12l6,-6z"/><path d="M483,229v12l6,-6z"/><path d="M483,259.500v12l6,-6z"/><path d="M483,285v12l6,-6z"/><path d="M483,316v12l6,-6z"/><path d="M483,342v12l6,-6z"/></g>
<path d="M253,374l4,5 7,-11M253,399.500l4,5 7,-11" fill="none" stroke="#111" stroke-width="2.200"/>
<text x="282.500" y="80.500" textLength="115" lengthAdjust="spacingAndGlyphs">新建动画图层(Y)</text>
<text x="282.500" y="106.500" textLength="116" lengthAdjust="spacingAndGlyphs">新建动画胶片(C)</text>
<text x="282.500" y="132" textLength="82" lengthAdjust="spacingAndGlyphs">编辑轨道(E)</text>
<text x="282.500" y="157.500" textLength="82" lengthAdjust="spacingAndGlyphs">动画曲线(F)</text>
<text x="282.500" y="188.500" textLength="90" lengthAdjust="spacingAndGlyphs">播放/停止(P)</text>
<text x="282.500" y="214.500" textLength="82" lengthAdjust="spacingAndGlyphs">播放设置(S)</text>
<text x="282.500" y="240" textLength="67" lengthAdjust="spacingAndGlyphs">跳转帧(R)</text>
<text x="282.500" y="270.500" textLength="53" lengthAdjust="spacingAndGlyphs">标签(A)</text>
<text x="282.500" y="296.500" textLength="72" lengthAdjust="spacingAndGlyphs">时间轴(M)</text>
<text x="282.500" y="327.500" textLength="118" lengthAdjust="spacingAndGlyphs">显示动画胶片(O)</text>
<text x="282.500" y="353" textLength="67" lengthAdjust="spacingAndGlyphs">透写台(B)</text>
<text x="282.500" y="379" textLength="155" lengthAdjust="spacingAndGlyphs">显示 2D 摄影机的边框</text>
<text x="282.500" y="404.500" textLength="85" lengthAdjust="spacingAndGlyphs">显示轨迹(H)</text>
<text x="282.500" y="430.500" textLength="168" lengthAdjust="spacingAndGlyphs">显示所有的图层边框(W)</text>
<!-- submenu -->
<rect x="497" y="65" width="234" height="81" fill="#7f8482" opacity=".3"/>
<rect x="495.500" y="63" width="233" height="81" fill="#cfd4d2" stroke="#a9aeab"/>
<rect x="498" y="117" width="229" height="26" fill="url(#gH)"/>
<text x="541.500" y="82.500" textLength="97.500" lengthAdjust="spacingAndGlyphs">动画文件夹(F)</text>
<text x="541.500" y="108.500" textLength="142" lengthAdjust="spacingAndGlyphs">2D 摄影机文件夹(C)</text>
<text x="541.500" y="134.500" textLength="52" lengthAdjust="spacingAndGlyphs">音频(A)</text>
<!-- cursor -->
<path d="M577,141V160L582,155 586,163 590,161 586,153 592,152z" fill="#36d4ae" stroke="#12372f" stroke-width="1"/>
</svg>
</body></html>
